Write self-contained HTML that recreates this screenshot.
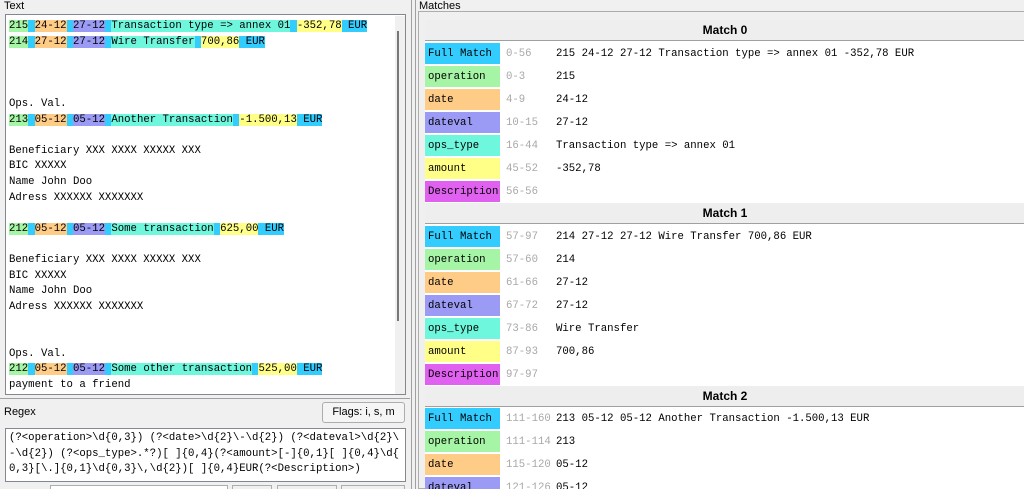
<!DOCTYPE html>
<html style="overflow:hidden;height:489px"><head><meta charset="utf-8"><style>
*{margin:0;padding:0;box-sizing:border-box}
body{width:1024px;height:489px;background:#f0f0f0;position:relative;overflow:hidden;font-family:"Liberation Sans",sans-serif;font-size:11px;color:#000}
.abs{position:absolute}
.mono{font-family:"Liberation Mono",monospace;font-size:10.67px;white-space:pre}
#text{left:5px;top:14px;width:401px;height:381px;background:#fff;border:1px solid #828790;overflow:hidden}
.ln{position:absolute;left:3px;height:15.6px;line-height:15.6px}
.g{background:#a6f5a6}.o{background:#ffcc88}.p{background:#9b9bf5}.t{background:#6ff7dd}.y{background:#ffff88}.b{background:#33ccff}.m{background:#e060f0}
#sb{left:389px;top:1px;width:15px;height:378px;background:#f0f0f0}
#regex{left:5px;top:428px;width:401px;height:54px;background:#fff;border:1px solid #828790}
#regex .mono{position:absolute;left:3px;line-height:15.5px}
#flags{left:322px;top:402px;width:83px;height:21px;border:1px solid #adadad;border-radius:3px;background:#f5f5f5;text-align:center;line-height:19px;font-size:11px}
#right{left:418px;top:11px;width:610px;height:478px;border:1px solid #adadad;border-right:none}
#inner{left:425px;top:20px;width:600px;height:469px;background:#fff}
.hdr{position:absolute;left:425px;width:600px;height:21px;background:#eeeeee;border-bottom:1px solid #a0a0a0;text-align:center;font-weight:bold;font-size:12px;line-height:21px}
.row{position:absolute;left:425px;width:599px;height:21px;line-height:22px}
.lab{position:absolute;left:0;top:0;width:75px;height:21px;padding-left:3px;font-family:"Liberation Mono",monospace;font-size:10.67px}
.rng{position:absolute;left:81px;top:0;color:#a8a8a8;font-family:"Liberation Mono",monospace;font-size:10.67px;white-space:pre}
.val{position:absolute;left:131px;top:0;font-family:"Liberation Mono",monospace;font-size:10.67px;white-space:pre}
</style></head><body>
<div class="abs" style="left:4px;top:0px">Text</div>
<div class="abs" style="left:419px;top:0px">Matches</div>
<div class="abs" style="left:411px;top:0;width:1px;height:489px;background:#a0a0a0"></div>
<div class="abs" style="left:415px;top:0;width:1px;height:489px;background:#a0a0a0"></div>
<div class="abs" style="left:0;top:398px;width:410px;height:1px;background:#a0a0a0"></div>
<div class="abs" id="text">
<div class="abs" id="sb"></div><div class="abs" style="left:391px;top:16px;width:2px;height:290px;background:#777"></div>
<div class="ln mono" style="top:4px"><span class="g">215</span><span class="b"> </span><span class="o">24-12</span><span class="b"> </span><span class="p">27-12</span><span class="b"> </span><span class="t">Transaction type =&gt; annex 01</span><span class="b"> </span><span class="y">-352,78</span><span class="b"> EUR</span></div>
<div class="ln mono" style="top:19.6px"><span class="g">214</span><span class="b"> </span><span class="o">27-12</span><span class="b"> </span><span class="p">27-12</span><span class="b"> </span><span class="t">Wire Transfer</span><span class="b"> </span><span class="y">700,86</span><span class="b"> EUR</span></div>
<div class="ln mono" style="top:82px">Ops. Val.</div>
<div class="ln mono" style="top:97.6px"><span class="g">213</span><span class="b"> </span><span class="o">05-12</span><span class="b"> </span><span class="p">05-12</span><span class="b"> </span><span class="t">Another Transaction</span><span class="b"> </span><span class="y">-1.500,13</span><span class="b"> EUR</span></div>
<div class="ln mono" style="top:128.8px">Beneficiary XXX XXXX XXXXX XXX</div>
<div class="ln mono" style="top:144.4px">BIC XXXXX</div>
<div class="ln mono" style="top:160px">Name John Doo</div>
<div class="ln mono" style="top:175.6px">Adress XXXXXX XXXXXXX</div>
<div class="ln mono" style="top:206.8px"><span class="g">212</span><span class="b"> </span><span class="o">05-12</span><span class="b"> </span><span class="p">05-12</span><span class="b"> </span><span class="t">Some transaction</span><span class="b"> </span><span class="y">625,00</span><span class="b"> EUR</span></div>
<div class="ln mono" style="top:238px">Beneficiary XXX XXXX XXXXX XXX</div>
<div class="ln mono" style="top:253.6px">BIC XXXXX</div>
<div class="ln mono" style="top:269.2px">Name John Doo</div>
<div class="ln mono" style="top:284.8px">Adress XXXXXX XXXXXXX</div>
<div class="ln mono" style="top:331.6px">Ops. Val.</div>
<div class="ln mono" style="top:347.2px"><span class="g">212</span><span class="b"> </span><span class="o">05-12</span><span class="b"> </span><span class="p">05-12</span><span class="b"> </span><span class="t">Some other transaction</span><span class="b"> </span><span class="y">525,00</span><span class="b"> EUR</span></div>
<div class="ln mono" style="top:362.8px;height:15px;overflow:hidden">payment to a friend</div>
</div>
<div class="abs" style="left:4px;top:406px">Regex</div>
<div class="abs" id="flags">Flags: i, s, m</div>
<div class="abs" id="regex">
<div class="mono" style="top:2px">(?&lt;operation&gt;\d{0,3}) (?&lt;date&gt;\d{2}\-\d{2}) (?&lt;dateval&gt;\d{2}\</div>
<div class="mono" style="top:17.5px">-\d{2}) (?&lt;ops_type&gt;.*?)[ ]{0,4}(?&lt;amount&gt;[-]{0,1}[ ]{0,4}\d{</div>
<div class="mono" style="top:33px">0,3}[\.]{0,1}\d{0,3}\,\d{2})[ ]{0,4}EUR(?&lt;Description&gt;)</div>
</div>
<div class="abs" style="left:50px;top:485px;width:178px;height:4px;border:1px solid #adadad;border-bottom:none;background:#fff"></div>
<div class="abs" style="left:232px;top:485px;width:40px;height:4px;border:1px solid #adadad;border-bottom:none"></div>
<div class="abs" style="left:277px;top:485px;width:60px;height:4px;border:1px solid #adadad;border-bottom:none"></div>
<div class="abs" style="left:341px;top:485px;width:64px;height:4px;border:1px solid #adadad;border-bottom:none"></div>
<div class="abs" id="right"></div>
<div class="abs" id="inner"></div>

<div class="hdr" style="top:20px">Match 0</div>
<div class="row" style="top:43px"><div class="lab b">Full Match</div><span class="rng">0-56</span><span class="val">215 24-12 27-12 Transaction type =&gt; annex 01 -352,78 EUR</span></div>
<div class="row" style="top:66px"><div class="lab g">operation</div><span class="rng">0-3</span><span class="val">215</span></div>
<div class="row" style="top:89px"><div class="lab o">date</div><span class="rng">4-9</span><span class="val">24-12</span></div>
<div class="row" style="top:112px"><div class="lab p">dateval</div><span class="rng">10-15</span><span class="val">27-12</span></div>
<div class="row" style="top:135px"><div class="lab t">ops_type</div><span class="rng">16-44</span><span class="val">Transaction type =&gt; annex 01</span></div>
<div class="row" style="top:158px"><div class="lab y">amount</div><span class="rng">45-52</span><span class="val">-352,78</span></div>
<div class="row" style="top:181px"><div class="lab m">Description</div><span class="rng">56-56</span></div>

<div class="hdr" style="top:203px">Match 1</div>
<div class="row" style="top:226px"><div class="lab b">Full Match</div><span class="rng">57-97</span><span class="val">214 27-12 27-12 Wire Transfer 700,86 EUR</span></div>
<div class="row" style="top:249px"><div class="lab g">operation</div><span class="rng">57-60</span><span class="val">214</span></div>
<div class="row" style="top:272px"><div class="lab o">date</div><span class="rng">61-66</span><span class="val">27-12</span></div>
<div class="row" style="top:295px"><div class="lab p">dateval</div><span class="rng">67-72</span><span class="val">27-12</span></div>
<div class="row" style="top:318px"><div class="lab t">ops_type</div><span class="rng">73-86</span><span class="val">Wire Transfer</span></div>
<div class="row" style="top:341px"><div class="lab y">amount</div><span class="rng">87-93</span><span class="val">700,86</span></div>
<div class="row" style="top:364px"><div class="lab m">Description</div><span class="rng">97-97</span></div>

<div class="hdr" style="top:386px">Match 2</div>
<div class="row" style="top:408px"><div class="lab b">Full Match</div><span class="rng">111-160</span><span class="val">213 05-12 05-12 Another Transaction -1.500,13 EUR</span></div>
<div class="row" style="top:431px"><div class="lab g">operation</div><span class="rng">111-114</span><span class="val">213</span></div>
<div class="row" style="top:454px"><div class="lab o">date</div><span class="rng">115-120</span><span class="val">05-12</span></div>
<div class="row" style="top:477px"><div class="lab p">dateval</div><span class="rng">121-126</span><span class="val">05-12</span></div>
</body></html>
